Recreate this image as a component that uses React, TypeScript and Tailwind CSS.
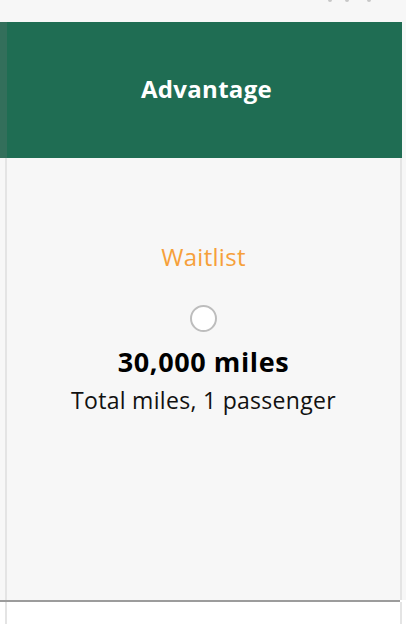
export default function App() {
  return (
    <div className="w-[406px] h-[624px] bg-[#f7f7f7] overflow-hidden flex flex-col" style={{ fontFamily: '"Open Sans", Lato, sans-serif' }}>
      <div className="h-[22px] relative shrink-0">
        <div className="absolute top-0 left-[328px] w-[4px] h-[2px] rounded-b bg-[#c8c8c8]" />
        <div className="absolute top-0 left-[345px] w-[4px] h-[2px] rounded-b bg-[#c8c8c8]" />
        <div className="absolute top-0 left-[367px] w-[4px] h-[2px] rounded-b bg-[#c8c8c8]" />
      </div>
      <div className="h-[136px] w-[402px] flex shrink-0">
        <div className="w-[7px] bg-[#336f5b]" />
        <div className="flex-1 bg-[#1f6d53] flex items-center justify-center">
          <span className="text-white font-bold text-[24px] tracking-[0.3px] leading-none pl-[4px] -mt-[2px]">Advantage</span>
        </div>
      </div>
      <div className="h-[442px] flex shrink-0">
        <div className="w-[5px]" />
        <div className="w-[2px] bg-[#e4e4e4]" />
        <div className="w-[393px] flex flex-col items-center pt-[84px]">
          <div className="text-[#f6a03a] text-[24px] tracking-[0.3px] leading-[30px]">Waitlist</div>
          <div className="mt-[33px] w-[27px] h-[27px] rounded-full border-2 border-[#bdbdbd] bg-white" />
          <div className="mt-[13px] text-black font-bold text-[27px] tracking-[0.6px] leading-[34px]">30,000 miles</div>
          <div className="mt-[6px] text-[#111] text-[23px] tracking-[0.3px] leading-[30px]">Total miles, 1 passenger</div>
        </div>
        <div className="w-[2px] bg-[#e4e4e4]" />
      </div>
      <div className="flex flex-col flex-1 bg-white">
        <div className="h-[2px] w-[400px] bg-[#9c9c9c]" />
        <div className="flex flex-1">
          <div className="w-[5px]" />
          <div className="w-[2px] bg-[#e4e4e4]" />
          <div className="w-[393px]" />
          <div className="w-[2px] bg-[#e4e4e4]" />
        </div>
      </div>
    </div>
  );
}
